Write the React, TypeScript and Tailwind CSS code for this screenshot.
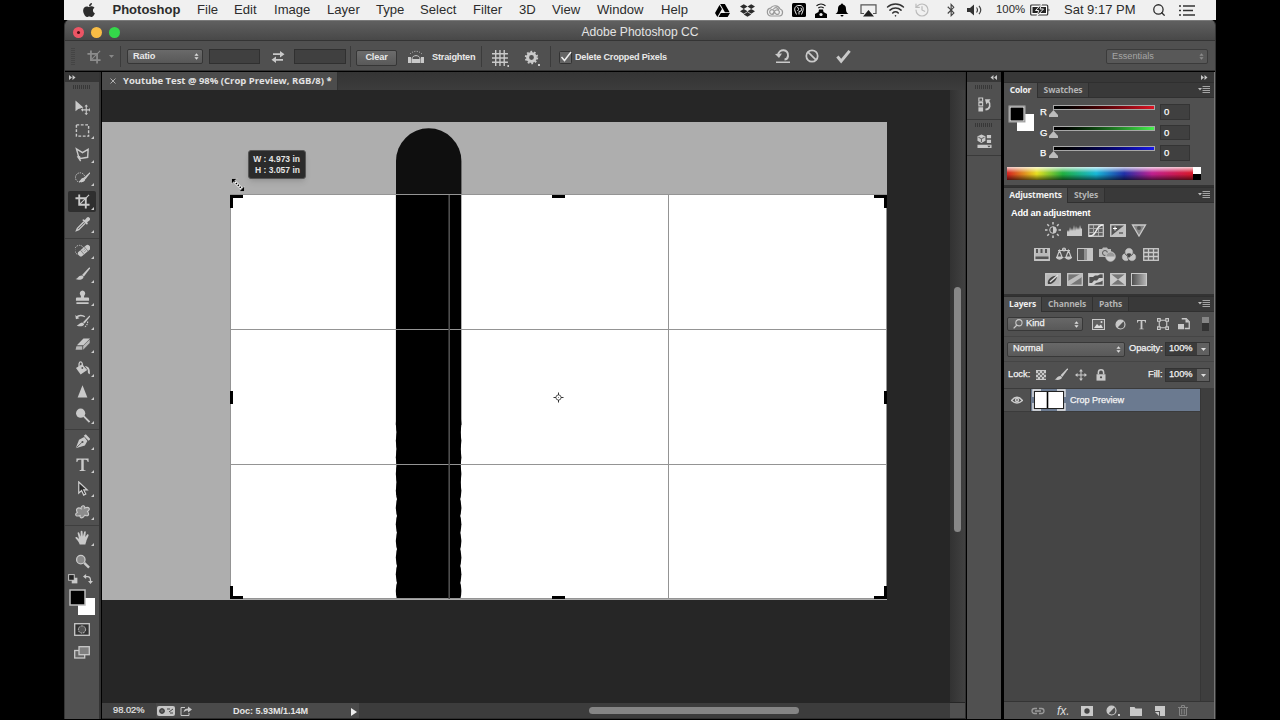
import React from "react";
import { FaApple, FaDropbox, FaBluetoothB, FaGoogleDrive } from "react-icons/fa";
import { Wifi, History, Search } from "lucide-react";

type P = { children?: React.ReactNode; className?: string };

/* 16-unit icon canvas shared by every tool and panel glyph */
const Icon = ({ children, className = "size-4" }: P) => (
  <svg viewBox="0 0 16 16" className={`shrink-0 ${className}`} fill="#c9c9c9" stroke="none">
    {children}
  </svg>
);

const line = { fill: "none", stroke: "#c9c9c9" } as const;

const CropGlyph = () => (
  <g {...line} strokeWidth="2">
    <path d="M4.5 .5v11H15.500M.5 4.500h11V15.500" />
    <path d="M5.500 10.500 15 1" strokeWidth="1.200" />
  </g>
);
const BrushGlyph = () => (
  <>
    <path d="M15.300.3 16.200 1.200 9.500 10.200 7.500 8.400z" />
    <path d="M7 9c1.500.2 2.300 1.100 2 2.200C8.300 13.600 3.500 14.500.5 12.800 3.200 12.600 3.500 9 7 9z" />
  </>
);
const MoveGlyph = () => (
  <>
    <path d="M8 2v12M2 8h12" {...line} strokeWidth="1.400" />
    <path d="M8 0l2.600 3.400H5.400zM8 16l2.600-3.400H5.400zM0 8l3.400-2.600v5.200zM16 8l-3.400-2.600v5.200z" />
  </>
);
const TypeGlyph = () => <path d="M1.500 1.500h13v3.800h-1c-.3-1.600-.9-2.300-2.500-2.300H9.300v10c0 .9.500 1.200 2 1.300v.7H4.700v-.7c1.500-.1 2-.4 2-1.300V3H5C3.400 3 2.800 3.700 2.500 5.300h-1z" />;
const HalfCircleGlyph = () => (
  <>
    <circle cx="8" cy="8" r="6.500" {...line} strokeWidth="1.700" />
    <path d="M12.600 3.400A6.500 6.500 0 0 0 3.400 12.600z" />
  </>
);

const toolGroups: { glyph: React.ReactNode; corner?: boolean; active?: boolean }[][] = [
  [
    {
      glyph: (
        <>
          <path d="M.5.5v11.500l3-2.500 5.500-1.500z" />
          <path d="M12 6v9M7.500 10.500h9" {...line} strokeWidth="1.200" />
          <path d="M12 4.800l1.900 2.200h-3.800zM12 16.200l1.900-2.200h-3.800zM6.300 10.500l2.200-1.900v3.800zM17 10.500l-1.800-1.900v3.800z" />
        </>
      ),
    },
    { glyph: <rect x="1.500" y="2" width="13" height="12" {...line} strokeWidth="1.500" strokeDasharray="3 1.700" />, corner: true },
    { glyph: <path d="M1.500 2 8 6l6-3.500-.5 8.500-9 1.500zM4.500 12.500 3 10.500c2-1 3 1 1.500 2L6 15" {...line} strokeWidth="1.500" />, corner: true },
    {
      glyph: (
        <>
          <circle cx="5.500" cy="8" r="5" {...line} strokeWidth="1" strokeDasharray="1.500 1" />
          <path d="M15.800 2.300 16.500 3l-5.300 6.800-1.900-1.500z" />
          <path d="M9 8.300c1.700.3 2.200 1.500 1.700 2.500-1.200 2.200-4.400 2.500-6.900 1.400 2.200-.5 2.700-3.900 5.200-3.900z" />
        </>
      ),
      corner: true,
    },
    { glyph: <CropGlyph />, corner: true, active: true },
    {
      glyph: (
        <>
          <path d="M9.500 5 2.500 12l-1 2.500L4 13.500l7-7" {...line} strokeWidth="1.400" />
          <path d="M7.700 3.300 12.700 8.300l1-1.200-.7-1.500 2.400-2A1.900 1.900 0 0 0 12.500.8l-2 2.400L9 2.300z" />
        </>
      ),
      corner: true,
    },
  ],
  [
    {
      glyph: (
        <>
          <circle cx="4.700" cy="7.500" r="5" {...line} strokeWidth="1" strokeDasharray="1.500 1" />
          <g transform="rotate(-40 10 8)">
            <rect x="2.300" y="5" width="15" height="6" rx="2.200" />
            <path d="M7 5v6M12.500 5v6" stroke="#777" strokeWidth=".8" />
            <path d="M8.500 7h.8M10.400 7h.8M8.500 9h.8M10.400 9h.8" stroke="#555" strokeWidth=".8" />
          </g>
        </>
      ),
      corner: true,
    },
    { glyph: <BrushGlyph />, corner: true },
    { glyph: <path d="M8 .5a3 3 0 0 1 2.500 4.500C9.600 6.300 9.500 7 9.700 8H14a1 1 0 0 1 1 1v2.500H1V9a1 1 0 0 1 1-1h4.300c.2-1 .1-1.700-.8-3A3 3 0 0 1 8 .5zM1.500 13h13v2h-13z" />, corner: true },
    {
      glyph: (
        <>
          <path d="M1.500 3.500C4 1 8 1 10.500 3" {...line} strokeWidth="1.500" />
          <path d="M.3 1 1 5.700l3.700-1.200zM15.500 1.700 16.300 2.500 10.200 10.200 8.500 8.700z" />
          <path d="M8 9.200c1.600.5 2 1.400 1.500 2.300-1.400 2-4.500 2.200-7.700.7 2.600-.4 3.700-3.400 6.200-3z" />
          <path d="M13.500 8c0 3-1.500 5-4 6" {...line} strokeWidth="1.200" strokeDasharray="1.500 1" />
        </>
      ),
      corner: true,
    },
    {
      glyph: (
        <>
          <path d="M9 1.500H16L9 8.800H2z" />
          <path d="M1.500 9.800h6.300v3.900H.6zM8.700 9.700l7-7v3.600l-7 7.200z" opacity=".85" />
        </>
      ),
      corner: true,
    },
    {
      glyph: (
        <>
          <path d="M7.500 3.500 13 9.500 6 14.500 1 7.500z" />
          <path d="M5 8.500C3.500 3 4.500 1 6 1s2.300 2 2 6" {...line} strokeWidth="1.400" />
          <path d="M10.500 5.200c3.800.3 5.800 2.200 5.300 8.800-2-.5-2.300-1.500-2.100-4.500z" />
          <circle cx="7.800" cy="7.500" r="1" fill="#555" />
        </>
      ),
      corner: true,
    },
    { glyph: <path d="M8 1.200 13.200 14.500H2.800z" />, corner: true },
    {
      glyph: (
        <>
          <circle cx="6" cy="5.500" r="4.900" />
          <path d="M9 8.500 15.500 15" stroke="#c9c9c9" strokeWidth="1.900" />
        </>
      ),
      corner: true,
    },
  ],
  [
    {
      glyph: (
        <>
          <path d="M9.800 3.300 13.200 7.500 10.500 12.200.8 15.200 4.300 6z" />
          <path d="M9.300 1.900 11.500.2 16.300 5.500 14.500 7.300z" />
          <path d="M1.500 14.500 7.300 9" stroke="#505050" strokeWidth=".9" />
          <circle cx="8" cy="8.500" r="1.100" fill="#505050" />
        </>
      ),
      corner: true,
    },
    { glyph: <TypeGlyph />, corner: true },
    { glyph: <path d="M4 1v12l3-2.800L9.300 15l2.200-1.200L9.300 9.500H13z" fill="#2b2b2b" stroke="#cfcfcf" strokeWidth="1.300" />, corner: true },
    { glyph: <path d="M6.500 5C6 1.500 11 .5 10.300 4.300c4.700-2 6.700 1.200 3 3.700 2.500 3.500.700 5.500-2.800 4-2.500 4-5.500 3.500-5 .3C1 14-1 11 2.500 9 0 5 3.500 3 6.500 5z" fill="#8c8c8c" stroke="#c9c9c9" strokeWidth="1.200" />, corner: true },
  ],
  [
    { glyph: <path d="M5 15.500C4.500 13 2 10.500.6 8.800c-.6-1 .6-1.900 1.600-1L4.300 9.700 2.800 3.500c-.2-1.300 1.500-1.600 1.800-.4L6 7.200 6 1.700c0-1.300 1.900-1.300 2 0L8.400 7l1.300-4.900c.3-1.200 2-.9 1.800.4l-.6 5 1.800-2.500c.8-.9 2.200 0 1.700 1L12.300 11c-.3 2-1 3-1.200 4.500z" />, corner: true },
    {
      glyph: (
        <>
          <circle cx="6.200" cy="6" r="4.500" fill="#8b8b8b" stroke="#c9c9c9" strokeWidth="1.400" />
          <path d="M9.800 9.500 15 14.500" stroke="#c9c9c9" strokeWidth="2.600" />
        </>
      ),
    },
  ],
];

const Toolbar = () => (
  <aside className="flex w-[36px] shrink-0 flex-col items-center border-r-2 border-[#333] bg-[#505050]">
    <div className="flex h-[10px] w-full items-center bg-[#373737] pl-1">
      <Chevrons />
    </div>
    <Grip />
    <div className="mt-[6.500px] flex w-full flex-col gap-[1.500px]">
      {toolGroups.map((group, i) => (
        <div key={i} className={i ? "border-t border-[#3e3e3e]" : ""}>
          {group.map((tool, j) => (
            <div key={j} className="flex h-[23.500px] items-center justify-center">
              <div className={`relative flex h-[21px] w-[28px] items-center justify-center rounded-[2px] ${tool.active ? "bg-[#2f2f2f]" : ""}`}>
                <Icon className="size-[15px]">{tool.glyph}</Icon>
                {tool.corner && (
                  <svg viewBox="0 0 3 3" className="absolute right-0.5 bottom-0.5 size-[3px]">
                    <path d="M3 0v3H0z" fill="#ccc" />
                  </svg>
                )}
              </div>
            </div>
          ))}
        </div>
      ))}
    </div>
    <div className="mt-px flex w-full items-center justify-between pr-1.5 pl-[3px]">
      <Icon className="size-[10px]">
        <rect x="6" y="6" width="9" height="9" />
        <rect x="1" y="1" width="9" height="9" fill="#222" stroke="#ccc" strokeWidth="1.500" />
      </Icon>
      <Icon className="size-[10px]">
        <path d="M4 4h3q5 0 5 6v2" {...line} strokeWidth="2" />
        <path d="M0 4l5-4v8zM12 16l-4-5h8z" />
      </Icon>
    </div>
    <svg viewBox="0 0 27 27" className="mt-[5px] size-[27px] shrink-0">
      <rect x="9" y="9" width="17" height="17" fill="#fff" />
      <rect x="1" y="1" width="15" height="15" fill="#000" stroke="#bdbdbd" strokeWidth="1.500" />
    </svg>
    <svg viewBox="0 0 16 13" className="mt-[7px] h-[13px] w-4 shrink-0">
      <rect x=".7" y=".7" width="14.600" height="11.600" fill="#333" stroke="#c9c9c9" strokeWidth="1.300" />
      <circle cx="8" cy="6.500" r="3.600" fill="#555" stroke="#c9c9c9" strokeDasharray="1.800 .8" />
    </svg>
    <svg viewBox="0 0 16 13" className="mt-[10px] h-[13px] w-4 shrink-0">
      <rect x=".7" y="4.500" width="10" height="7.500" fill="#666" stroke="#c9c9c9" strokeWidth="1.300" />
      <rect x="5" y=".7" width="10.300" height="8" fill="#808080" stroke="#c9c9c9" strokeWidth="1.300" />
    </svg>
  </aside>
);

const Chevrons = ({ flip = false }: { flip?: boolean }) => (
  <svg viewBox="0 0 7 5" className={`h-[5px] w-[7px] ${flip ? "-scale-x-100" : ""}`} fill="#c8c8c8">
    <path d="M0 0l3 2.500L0 5zM3.500 0l3 2.500-3 2.500z" />
  </svg>
);

const Grip = () => (
  <svg viewBox="0 0 18 4" className="mt-[3px] h-1 w-[18px] shrink-0">
    <path d="M0 1h18M0 3h18" stroke="#2f2f2f" strokeDasharray="1 1" strokeWidth="1.500" />
  </svg>
);

const UpDown = ({ dim = false }: { dim?: boolean }) => (
  <svg viewBox="0 0 6 8" className="h-[7px] w-[5px]" fill={dim ? "#8c8c8c" : "#ddd"}>
    <path d="M3 0l2.500 3h-5zM3 8l2.500-3h-5z" />
  </svg>
);

const Divider = ({ className = "" }: P) => <div className={`h-[21px] w-px shrink-0 bg-[#3b3b3b] ${className}`} />;

const menus = [
  ["File", "w-[37px]"], ["Edit", "w-[40px]"], ["Image", "w-[53px]"], ["Layer", "w-[49px]"], ["Type", "w-[44px]"],
  ["Select", "w-[53px]"], ["Filter", "w-[46px]"], ["3D", "w-[33px]"], ["View", "w-[45px]"], ["Window", "w-[64px]"], ["Help", "w-[54px]"],
];

const MenuBar = () => (
  <header className="flex h-5 items-center bg-[#f0f0f0] pl-[17px] text-[13.100px] text-[#2c2c2c]">
    <div className="w-[31.500px]"><FaApple className="-mt-px size-4" /></div>
    <div className="w-[84.500px] text-[13px] font-bold">Photoshop</div>
    {menus.map(([label, width]) => (
      <div key={label} className={`shrink-0 whitespace-nowrap ${width}`}>{label}</div>
    ))}
    <div className="flex shrink-0 items-center">
      <div className="w-[25px]"><FaGoogleDrive className="size-[15px] text-black" /></div>
      <div className="w-[26px]"><FaDropbox className="size-[15px]" /></div>
      <div className="w-[26px]">
        <svg viewBox="0 0 18 13" className="h-[13px] w-[18px]" fill="none" stroke="#999" strokeWidth="1.200">
          <path d="M5 12a4 4 0 0 1-.5-7.900A5.500 5.500 0 0 1 14 5a3.600 3.600 0 0 1-.5 7z" />
          <circle cx="6" cy="8" r="2.300" /><path d="M8 7.500 10 10c3 2 5-3 1.500-4S8 10 6 10.500M7.500 5c2-2.500 5-1 5 1" />
        </svg>
      </div>
      <div className="w-[22px]">
        <svg viewBox="0 0 14 14" className="size-[14px]">
          <rect width="14" height="14" rx="1.500" fill="#000" />
          <path d="M7 2.500C3.500 2.500 2 5 3 8l1.500 3.500M5 5c1-1 2 0 1.500 1.500L5.500 8M7 2.500c3-.5 5 2 4 5L9.500 11.500M8.500 5c1.500 0 1.500 2 .5 3l-2 .5v3" fill="none" stroke="#eee" strokeWidth="1" />
        </svg>
      </div>
      <div className="w-[21px]">
        <svg viewBox="0 0 14 15" className="h-[15px] w-[14px]">
          <path d="M2.500 2.800Q7-.8 11.500 2.800M4.300 5Q7 3 9.700 5" fill="none" stroke="#111" strokeWidth="1.100" />
          <path d="M5 6.500h4l.5 2.500L13 11v4H1v-4l3.500-2z" fill="#000" /><circle cx="7" cy="11.500" r="1.600" fill="#eee" />
        </svg>
      </div>
      <div className="w-[25px]">
        <svg viewBox="0 0 14 14" className="size-[14px]">
          <path d="M7 .5a1 1 0 0 1 1 1c2.500.5 3 2.500 3 4.500 0 3 1 4 2.500 5H.5C2 10 3 9 3 6c0-2 .5-4 3-4.500a1 1 0 0 1 1-1zM5.500 12h3a1.500 1.500 0 0 1-3 0z" fill="#000" />
        </svg>
      </div>
      <div className="w-[26px]">
        <svg viewBox="0 0 17 13" className="h-[13px] w-[17px]">
          <path d="M4 9.500H1V.8h15v8.700h-3" fill="none" stroke="#555" strokeWidth="1.200" /><path d="M8.500 6 14 12.500H3z" fill="#222" />
        </svg>
      </div>
      <div className="w-[28px]"><Wifi className="-mt-0.5 size-[19px] text-[#333]" strokeWidth={2} /></div>
      <div className="w-[30px]"><History className="size-4 text-[#bbb]" strokeWidth={1.8} /></div>
      <div className="w-[23px]"><FaBluetoothB className="size-[14px] text-[#444]" /></div>
      <div className="w-[29px]">
        <svg viewBox="0 0 16 12" className="h-3 w-4" fill="#333">
          <path d="M0 4h3l4-3.500v11L3 8H0z" /><path d="M9.500 3.500q2 2.500 0 5M12 1.800q3.500 4.200 0 8.400" fill="none" stroke="#444" strokeWidth="1.200" />
        </svg>
      </div>
      <div className="w-[34px] text-[11.400px]">100%</div>
      <div className="w-[34px]">
        <svg viewBox="0 0 21 12" className="h-3 w-[21px]">
          <rect x=".7" y="1" width="17" height="10" rx="1" fill="#fff" stroke="#333" strokeWidth="1.200" />
          <path d="M2.500 3h13.500v6H2.500z" fill="#222" /><path d="M18.500 4.500q2 1.500 0 3z" fill="#333" />
          <path d="M11.500 0 5.500 6.500h3.200L7 12l6.500-7H10z" fill="#222" stroke="#f0f0f0" strokeWidth="1" />
        </svg>
      </div>
      <div className="w-[88px] text-[13px] whitespace-nowrap">Sat 9:17 PM</div>
      <div className="w-[27px]"><Search className="size-[14px]" strokeWidth={2.2} /></div>
      <svg viewBox="0 0 17 11" className="h-[11px] w-[17px]">
        <path d="M4 1h12M4 5.500h10M4 10h12" stroke="#333" strokeWidth="1.500" /><path d="M0 1h2M0 5.500h2M0 10h2" stroke="#333" strokeWidth="1.500" />
      </svg>
    </div>
  </header>
);

const TitleBar = () => (
  <div className="grid h-[21px] grid-cols-[1fr_auto_1fr] items-center border-t border-b border-t-[#7a7a7a] border-b-[#343434] bg-linear-to-b from-[#606060] to-[#484848] px-2">
    <div className="mt-0.5 flex gap-[7px]">
      <div className="flex size-[11px] items-center justify-center rounded-full bg-[#ed5565]"><div className="size-[3px] rounded-full bg-[#4d0d14]" /></div>
      <div className="size-[11px] rounded-full bg-[#f9bd45]" />
      <div className="size-[11px] rounded-full bg-[#34d84a]" />
    </div>
    <div className="mt-0.5 text-[12.100px] text-[#e4e4e4]">Adobe Photoshop CC</div>
  </div>
);

const OptionsBar = () => (
  <div className="flex h-[30px] items-center border-b border-[#343434] bg-[#505050] pt-[2px] pl-[6px] text-[9.200px] font-bold tracking-[-0.150px] text-[#e8e8e8]">
    <svg viewBox="0 0 4 18" className="h-[18px] w-1"><path d="M1 0v18M3 0v18" stroke="#383838" strokeDasharray="1 1" /></svg>
    <Icon className="ml-3 size-[14px] opacity-50"><CropGlyph /></Icon>
    <svg viewBox="0 0 5 3" className="ml-2 h-[3px] w-[5px]"><path d="M0 0h5L2.500 3z" fill="#888" /></svg>
    <Divider className="ml-[6px]" />
    <div className="ml-[6px] flex h-[15px] w-[76px] items-center justify-between rounded-[2px] border border-[#363636] bg-linear-to-b from-[#6a6a6a] to-[#585858] pr-[3px] pl-[5px]">Ratio<UpDown /></div>
    <div className="ml-[6px] h-[15px] w-[51px] border border-[#303030] bg-[#404040]" />
    <svg viewBox="0 0 14 12" className="ml-[11px] h-3 w-[14px]" fill="#c9c9c9"><path d="M2 2.300h7V0l4.500 3.200L9 6.400V4.100H2zM12 9.700H5V12L.5 8.800 5 5.600v2.300h7z" /></svg>
    <div className="ml-[9px] h-[15px] w-[52px] border border-[#303030] bg-[#404040]" />
    <Divider className="ml-[4px]" />
    <div className="mt-[3px] ml-[5px] flex h-[16px] w-[41px] items-center justify-center rounded-[2px] border border-[#363636] bg-linear-to-b from-[#6c6c6c] to-[#595959]">Clear</div>
    <svg viewBox="0 0 16 14" className="mt-[1px] ml-[11px] h-[14px] w-4" fill="#c9c9c9">
      <path d="M0 7h3v6H0zM13 7h3v6h-3zM3.500 9h9v4h-9z" /><path d="M4 9c0-4.500 8-4.500 8 0" fill="none" stroke="#c9c9c9" /><path d="M2 4Q8-1.500 14 4" fill="none" stroke="#c9c9c9" strokeDasharray="1 1.500" />
    </svg>
    <div className="mt-[3px] ml-2 w-[49px] tracking-[-0.200px]">Straighten</div>
    <Divider />
    <Icon className="mt-[3px] ml-[10px] size-[17px]"><path d="M3.500 0v15M7.500 0v15M11.500 0v15M0 3.500h15M0 7.500h15M0 11.500h15" {...line} strokeWidth="1.300" /><path d="M14.500 14h2v2h-2z" /></Icon>
    <Icon className="mt-[3px] ml-[15px] size-4">
      <circle cx="7.500" cy="7.500" r="3.900" {...line} strokeWidth="3" /><circle cx="7.500" cy="7.500" r="5.700" {...line} strokeWidth="2" strokeDasharray="1.790 1.790" /><path d="M14 14h2v2h-2z" />
    </Icon>
    <Divider className="ml-[10px]" />
    <svg viewBox="0 0 13 13" className="mt-[1px] ml-2 size-[13px]"><rect x=".5" y=".5" width="12" height="12" rx="1" fill="#646464" stroke="#333" /><path d="M2.500 6 5.500 9.500 12 1" fill="none" stroke="#eee" strokeWidth="1.500" /></svg>
    <div className="mt-[3px] ml-[3px] w-[200px] text-[9.100px] tracking-[-0.200px]">Delete Cropped Pixels</div>
    <Icon className="-mt-0.5 size-4"><path d="M3 7C4 0 14 1 13 8c-.3 2-1.500 3.500-3.500 3.500" {...line} strokeWidth="2" /><path d="M0 6l7-.5L4 10zM1 13.500h14V15H1z" /></Icon>
    <Icon className="-mt-0.5 ml-[14px] size-[14px]"><circle cx="8" cy="8" r="6.500" {...line} strokeWidth="2" /><path d="M3.500 3.500l9 9" {...line} strokeWidth="2" /></Icon>
    <Icon className="-mt-px ml-[17px] size-[15px]"><path d="M1.500 8 5.500 13 14.500 2" {...line} strokeWidth="3.200" /></Icon>
    <div className="mr-[7px] ml-auto flex h-[15px] w-[102px] items-center justify-between rounded-[2px] border border-[#3b3b3b] bg-[#585858] pr-[3px] pl-[5px] font-normal tracking-normal text-[#a5a5a5]">Essentials<UpDown dim /></div>
  </div>
);

/* Stroke edge becomes scalloped where the brush dabs were spaced apart */
const dabs = [0, 1, 2, 3, 4, 5, 6, 7, 8, 9, 10];

const Artwork = () => (
  <svg viewBox="102 122 785 478" className="block h-[478px] w-[785px]">
    <rect x="102" y="122" width="785" height="478" fill="#aeaeae" />
    <path d="M396 200V161a32.700 32.700 0 0 1 65.400 0v39z" fill="#0f0f0f" />
    <rect x="230" y="195" width="657" height="404" fill="#fff" />
    <rect x="395.900" y="195" width="65.400" height="230" fill="#000" />
    <rect x="396.400" y="420" width="64.400" height="75" fill="#000" />
    <clipPath id="sheet"><rect x="230" y="195" width="657" height="404" /></clipPath>
    <g clipPath="url(#sheet)">
      {dabs.map((n) => <circle key={n} cx="428.600" cy={424 + n * 16.7} r="32.800" fill="#000" />)}
    </g>
    <g fill="none" stroke="#949494">
      <path d="M230.500 194.500v404M230 194.500h657M230 329.500h657M230 464.500h657M668.500 195v404M230 598.500h657M886.500 195v404" />
      <path d="M449.200 195v404" stroke="#4e4e4e" strokeWidth="1.600" />
    </g>
    <path d="M230 195h13v3h-10v10h-3zM887 195h-13v3h10v10h3zM230 599h13v-3h-10v-10h-3zM887 599h-13v-3h10v-10h3zM552 195h13v3h-13zM552 596h13v3h-13zM230 391h3v13h-3zM884 391h3v13h-3z" fill="#000" />
    <circle cx="558.500" cy="397.500" r="2.600" fill="none" stroke="#555" />
    <path d="M558.500 392.500v2.500M558.500 400v2.500M553.500 397.500h2.500M561 397.500h2.500" stroke="#333" />
    <circle cx="558.500" cy="397.500" r=".5" fill="#555" />
  </svg>
);

const DocumentArea = () => (
  <main className="ml-px flex w-[864px] shrink-0 flex-col border-r border-[#303030] bg-[#262626]">
    <div className="h-[18px] bg-linear-to-b from-[#343434] to-[#3c3c3c]">
      <div className="flex h-[18px] w-[236px] items-center gap-[7px] border-r border-[#333] bg-[#4c4c4c] pl-2 font-['Open_Sans'] text-[9.500px] font-bold text-[#e2e2e2]">
        <svg viewBox="0 0 6 6" className="size-[6px]"><path d="M.5.5l5 5M5.500.5l-5 5" stroke="#bbb" strokeWidth=".9" /></svg>
        <span className="whitespace-nowrap">Youtube Test @ 98% (Crop Preview, RGB/8) *</span>
      </div>
    </div>
    <div className="flex h-[613px]">
      <div className="relative w-[848px] pt-8">
        <Artwork />
        <div className="absolute top-[60px] left-[146px] h-[29px] w-[58px] rounded-[3px] border border-[#555] bg-[#2b2b2b] pt-[3px] pr-[5px] text-right text-[8.500px] leading-[11px] font-bold whitespace-nowrap text-[#e5e5e5] shadow-md">
          <div>W : 4.973 in</div>
          <div>H : 3.057 in</div>
        </div>
        <svg viewBox="0 0 14 14" className="absolute top-[88px] left-[129px] size-[14px]">
          <path d="M3 3l8 8" stroke="#fff" strokeWidth="2.500" /><path d="M3 3l8 8" stroke="#000" strokeWidth="1.500" strokeDasharray="1.500 1.200" />
          <path d="M.5.5H6L.5 6zM13.500 13.500H8l5.500-5.500z" fill="#000" stroke="#ddd" strokeWidth=".6" />
        </svg>
      </div>
      <div className="w-[15px] bg-linear-to-r from-[#323232] to-[#414141] pt-[197px] pl-1"><div className="h-[245px] w-[7px] rounded-full bg-[#878787]" /></div>
    </div>
    <div className="mt-px flex h-[16px] items-center border-b border-[#2d2d2d] bg-[#3c3c3c] text-[9.300px] text-[#e5e5e5]">
      <div className="flex h-full w-[257px] items-center bg-[#4a4a4a]">
        <div className="flex h-full w-[54px] items-center bg-[#424242] pt-px pl-[11px] [-webkit-text-stroke:0.200px]">98.02%</div>
        <svg viewBox="0 0 18 10" className="mt-px ml-[1px] h-[10px] w-[18px]"><rect width="18" height="10" rx="2" fill="#c6c6c6" /><circle cx="5" cy="5" r="2" fill="none" stroke="#444" strokeWidth="1.500" /><path d="M5 2v6M2 5h6M10 3h3M12 6l4-3M13 7h3" stroke="#444" /></svg>
        <svg viewBox="0 0 12 10" className="ml-[5px] h-[10px] w-3"><path d="M5 1.500H1v8h8V7" fill="none" stroke="#c6c6c6" /><path d="M3.500 6.500C4 3.500 5.500 2.600 8 2.600V.5L12 3.500 8 6.500V4.500C6 4.500 5 5 3.500 6.500z" fill="#c6c6c6" /></svg>
        <div className="ml-[41px] w-[118px] pt-0.5 text-[9.100px] font-bold tracking-[-0.050px]">Doc: 5.93M/1.14M</div>
        <svg viewBox="0 0 6 8" className="mt-0.5 h-2 w-[6px]"><path d="M0 0l6 4-6 4z" fill="#eee" /></svg>
      </div>
      <div className="ml-[230px] h-[7px] w-[210px] rounded-full bg-[#858585]" />
      <div className="ml-auto h-full w-[15px] bg-[#505050]" />
    </div>
  </main>
);

const IconDock = () => (
  <div className="ml-px flex w-[34px] shrink-0 flex-col items-center bg-[#505050]">
    <div className="flex h-[10px] w-full items-center justify-end bg-[#373737] pr-1"><Chevrons flip /></div>
    <Grip />
    <div className="flex h-[31px] w-full items-center justify-center border-b border-[#3a3a3a]">
      <Icon className="size-[15px]">
        <path d="M2 1h4v3.500H2zM2 6h4v3.500H2z" {...line} strokeWidth="1.200" /><path d="M1.500 11h5v4.500h-5z" />
        <path d="M9 13.500C14 13 15 8 12 4" {...line} strokeWidth="1.900" /><path d="M8.500 2.500h6L10 8z" />
      </Icon>
    </div>
    <Grip />
    <div className="flex h-[29px] w-full items-center justify-center border-b border-[#3a3a3a]">
      <Icon className="size-[15px]">
        <path d="M4.700.5 9 2.500v4.800l-4.300 2.200L.5 7.300V2.500z" /><path d="M1.500 3.500 4.700 5 8 3.500M4.700 5v3.500" fill="none" stroke="#555" />
        <path d="M10.500 1h4.500v3.500h-4.500zM10.500 6h4.500v3.500h-4.500zM.5 11.500h15V15H.5z" /><path d="M11 12.500h3.500l-1.700 2z" fill="#444" />
      </Icon>
    </div>
  </div>
);

const PanelTabs = ({ tabs }: { tabs: [string, string][] }) => (
  <div className="flex h-[16px] shrink-0 items-stretch border-t border-[#2f2f2f] bg-[#393939] font-['Open_Sans'] text-[8.500px] font-bold tracking-[-0.150px]">
    {tabs.map(([name, width], i) => (
      <div key={name} className={`flex items-center justify-center border-r border-[#303030] ${width} ${i === 0 ? "bg-[#505050] text-[#f0f0f0]" : "border-b bg-[#414141] text-[#b4b4b4]"}`}>{name}</div>
    ))}
    <div className="flex flex-1 items-center justify-end border-b border-[#303030] pr-1">
      <svg viewBox="0 0 12 8" className="h-2 w-3"><path d="M0 2h4L2 4.500z" fill="#bbb" /><path d="M4.500.5H12M4.500 2.500H12M4.500 4.500H12M4.500 6.500H12" stroke="#a5a5a5" /></svg>
    </div>
  </div>
);

const channels = [
  ["R", "to-[#dc1424]"],
  ["G", "to-[#46f04e]"],
  ["B", "to-[#1818e8]"],
];

const ColorPanel = () => (
  <section className="h-[87px] bg-[#505050]">
    <div className="flex h-[69px] pl-1">
      <svg viewBox="0 0 27 27" className="mt-[7px] size-[27px]"><rect x="9" y="9" width="17" height="17" fill="#fff" /><rect x="1" y="1" width="16" height="16" fill="#000" stroke="#aaa" /><rect x="2" y="2" width="14" height="14" fill="none" stroke="#fff" /></svg>
      <div className="flex flex-col gap-[5px] pt-[6px] pl-[5px]">
        {channels.map(([name, to]) => (
          <div key={name} className="flex h-[15.700px] items-start text-[9.500px] leading-4 text-white [-webkit-text-stroke:0.250px]">
            <div className="w-[13px]">{name}</div>
            <div className="mt-px w-[102px]">
              <div className={`h-[5px] border border-[#a8a8a8] bg-linear-to-r from-black ${to}`} />
              <svg viewBox="0 0 9 7" className="-ml-1 h-[7px] w-[9px]"><path d="M4.500 0 9 5v2H0V5z" fill="#bdbdbd" /></svg>
            </div>
            <div className="ml-[5px] h-[15.700px] w-[30px] border border-[#343434] bg-[#404040] pl-[3px] leading-[14px]">0</div>
          </div>
        ))}
      </div>
    </div>
    <div className="ml-[3px] flex h-[13px] w-[194px]">
      <div className="flex-1 bg-[linear-gradient(90deg,#d62020,#e8e020_16%,#20b040_30%,#18b8d8_48%,#2030a8_63%,#c02090_78%,#d81828)]">
        <div className="h-full bg-[linear-gradient(180deg,#ffffffcc,#ffffff00_45%,#00000000_55%,#00000099)]" />
      </div>
      <div className="flex w-2 flex-col"><div className="h-[7px] bg-white" /><div className="h-[6px] bg-black" /></div>
    </div>
  </section>
);

const Frame = ({ children, fill = "#b9b9b9" }: P & { fill?: string }) => (
  <svg viewBox="0 0 16 13" className="h-[13px] w-4 shrink-0"><rect x=".7" y=".7" width="14.600" height="11.600" fill={fill} stroke="#c9c9c9" strokeWidth="1.300" />{children}</svg>
);

const AdjustmentsPanel = () => (
  <section className="h-[91px] bg-[#505050] pt-1">
    <div className="pl-[7px] text-[9.200px] leading-[13px] font-bold tracking-[-0.200px] text-white">Add an adjustment</div>
    <div className="flex h-[20px] items-center gap-[5.600px] pl-[41px]">
      <Icon><circle cx="8" cy="8" r="3.300" {...line} /><path d="M8 4.700a3.300 3.300 0 0 1 0 6.600z" /><path d="M8 0v2.500M8 13.500V16M0 8h2.500M13.500 8H16M2.300 2.300 4 4M12 12l1.700 1.700M13.700 2.300 12 4M4 12l-1.700 1.700" {...line} strokeWidth="1.500" /></Icon>
      <svg viewBox="0 0 16 11" className="h-[11px] w-4" fill="#c9c9c9"><path d="M0 11V7l1-2 1 2 1-5 1 4 1-3 1 3 1-6 1 6 1-5 1 4 1-3 1 3 1-5 1 4 1-1v8z" /></svg>
      <Frame fill="#606060"><path d="M1 4.500h14M1 8.500h14M5.500 1v11M10.500 1v11" stroke="#aaa" /><path d="M1 12C10 12 7 1 15 1" fill="none" stroke="#eee" strokeWidth="1.400" /></Frame>
      <Frame fill="#c0c0c0"><path d="M1.500 11.500v-10h12.500z" fill="#555" /><path d="M3 4.500h4M5 2.500v4" stroke="#fff" /><path d="M9 9h4" stroke="#333" strokeWidth="1.200" /></Frame>
      <svg viewBox="0 0 16 13" className="h-[13px] w-4"><path d="M1.500 1h13L8 12z" fill="#858585" stroke="#c9c9c9" strokeWidth="1.300" /><circle cx="8" cy="4" r="2" fill="#555" /></svg>
    </div>
    <div className="mt-[4px] flex h-[20px] items-center gap-[5.600px] pl-[30px]">
      <Frame><path d="M2 1h2v4H2zM6.500 1h2v4h-2zM11 1h2v4h-2zM1.500 8.500h13v2.500h-13z" fill="#555" /></Frame>
      <svg viewBox="0 0 16 14" className="h-[14px] w-4" fill="none" stroke="#c9c9c9" strokeWidth="1.200"><path d="M8 1v3M2 3.500h12M3.500 3.500 1 10h5zM12.500 3.500 10 10h5z" /><circle cx="8" cy="2.500" r="1.500" /><path d="M.5 10.500h6q-3 3-6 0zM9.500 10.500h6q-3 3-6 0z" fill="#c9c9c9" /></svg>
      <Frame fill="#c3c3c3"><path d="M1 1h6v11H1z" fill="#555" /><path d="M7 1h3v11H7z" fill="#909090" /></Frame>
      <svg viewBox="0 0 17 15" className="h-[15px] w-[17px]"><path d="M0 2h3l1-1.500h4L9 2h3v8H0z" fill="#b9b9b9" /><circle cx="6" cy="6" r="2.500" fill="none" stroke="#555" /><circle cx="11.500" cy="9.500" r="4.700" fill="#999" stroke="#ccc" /><path d="M7 9.500h9a4.500 4.500 0 0 1-9 0z" fill="#ccc" /></svg>
      <svg viewBox="0 0 16 15" className="h-[15px] w-4"><g fill="#c4c4c4" stroke="#4a4a4a" strokeWidth=".8"><circle cx="5" cy="10" r="4.300" /><circle cx="11" cy="10" r="4.300" /><circle cx="8" cy="5" r="4.300" /></g><path d="M5.500 7q2.500-1.500 5 0L8 11z" fill="#444" /></svg>
      <Frame fill="#606060"><path d="M1 4.500h14M1 8.500h14M5.500 1v11M10.500 1v11" stroke="#c9c9c9" strokeWidth="1.300" /></Frame>
    </div>
    <div className="mt-[5px] flex h-[20px] items-center gap-[5.600px] pl-[41px]">
      <Frame><path d="M3 11C1 5 12 1 12 3.500S8 12 3 11z" fill="#444" /><path d="M5 9 13 2" stroke="#ddd" strokeWidth="1.500" /></Frame>
      <Frame fill="#777"><path d="M1 8 13 1h2v3L3 12H1z" fill="#bdbdbd" /></Frame>
      <Frame fill="#505050"><path d="M1 10h3l2-2.500h3L11 5h4v2.500L12 9l-4 1-2 2H1zM1 4h4l2-1.500h3L12 1H1z" fill="#d0d0d0" /></Frame>
      <Frame fill="#777"><path d="M1 1 8 6.500 1 12zM15 1 8 6.500 15 12z" fill="#c9c9c9" /></Frame>
      <div className="h-[13px] w-4 border border-[#c9c9c9] bg-linear-to-r from-[#505050] to-[#b5b5b5]" />
    </div>
  </section>
);

const PercentField = () => (
  <div className="flex h-[14px] w-[45px] shrink-0 border border-[#333]">
    <div className="flex w-[31px] items-center bg-[#3b3b3b] pl-[3px] tracking-[-0.100px]">100%</div>
    <div className="flex flex-1 items-center justify-center bg-[#606060]"><svg viewBox="0 0 5 3" className="h-[3px] w-[5px]"><path d="M0 0h5L2.500 3z" fill="#ddd" /></svg></div>
  </div>
);

const LayersPanel = () => (
  <section className="flex flex-1 flex-col bg-[#505050] text-[9.300px] text-[#f2f2f2] [-webkit-text-stroke:0.250px]">
    <div className="flex h-[25px] items-center border-b border-[#454545] pl-[3px]">
      <div className="flex h-[14px] w-[76px] items-center rounded-[2px] border border-[#383838] bg-linear-to-b from-[#686868] to-[#595959] pr-[3px] pl-[5px]">
        <Icon className="size-[10px]"><circle cx="9.500" cy="6" r="5" {...line} strokeWidth="1.700" /><path d="M6 10 1 15" {...line} strokeWidth="2" /></Icon>
        <span className="ml-[3px] flex-1">Kind</span><UpDown />
      </div>
      <svg viewBox="0 0 13 11" className="ml-[9px] h-[11px] w-[13px]"><rect x=".5" y=".5" width="12" height="10" fill="#606060" stroke="#c9c9c9" /><path d="M2 9 5 5l2 2 2-1.500L11 9z" fill="#ddd" /><circle cx="9.500" cy="3" r="1" fill="#ddd" /></svg>
      <Icon className="ml-[10px] size-[11px]"><HalfCircleGlyph /></Icon>
      <Icon className="ml-[10px] size-[11px]"><TypeGlyph /></Icon>
      <Icon className="ml-[10px] size-3"><path d="M3 3h10v10H3z" {...line} strokeWidth="1.500" /><path d="M0 0h5v5H0zM11 0h5v5h-5zM0 11h5v5H0zM11 11h5v5h-5z" /><path d="M1.500 1.500h2v2h-2zM12.500 1.500h2v2h-2zM1.500 12.500h2v2h-2zM12.500 12.500h2v2h-2z" fill="#505050" /></Icon>
      <Icon className="ml-[9px] size-[12px]"><path d="M5 1h6l4 4v9H9" {...line} strokeWidth="1.700" /><path d="M10 1v5h5zM0 8h8v7H0z" /></Icon>
      <div className="ml-[12px] h-[14px] w-[7px] bg-[#333]"><div className="h-[6px] bg-[#858585]" /></div>
    </div>
    <div className="flex h-[25px] items-center border-b border-[#454545] pl-[3px]">
      <div className="flex h-[15px] w-[118px] items-center justify-between rounded-[2px] border border-[#383838] bg-linear-to-b from-[#686868] to-[#595959] pr-[3px] pl-[5px]">Normal<UpDown /></div>
      <div className="ml-1 w-[36px] tracking-[-0.050px]">Opacity:</div>
      <PercentField />
    </div>
    <div className="flex h-[26px] items-center pl-[4px]">
      <div className="w-[28px]">Lock:</div>
      <svg viewBox="0 0 10 10" className="size-[10px]"><rect width="10" height="10" fill="#c9c9c9" /><path d="M2 1h2v2H2zM6 1h2v2H6zM0 3h2v2H0zM4 3h2v2H4zM8 3h2v2H8zM2 5h2v2H2zM6 5h2v2H6zM0 7h2v2H0zM4 7h2v2H4zM8 7h2v2H8z" fill="#777" /></svg>
      <Icon className="ml-[8px] size-[14px]"><BrushGlyph /></Icon>
      <Icon className="ml-[7px] size-[12px]"><MoveGlyph /></Icon>
      <Icon className="ml-[8px] size-[12px]"><path d="M4.500 7V4.500a3.500 3.500 0 0 1 7 0V7" {...line} strokeWidth="2" /><path d="M2 7h12v8.500H2z" /><circle cx="8" cy="11" r="1.500" fill="#505050" /></Icon>
      <div className="ml-auto w-[17px]">Fill:</div>
      <div className="mr-1"><PercentField /></div>
    </div>
    <div className="flex flex-1">
      <div className="flex flex-1 flex-col bg-[#454545]">
        <div className="flex h-[24px] items-center border-t border-b border-[#3b3b3b] bg-[#6b7a90]">
          <div className="flex h-full w-[27px] items-center justify-center border-r border-[#3b3b3b] bg-[#505050]">
            <svg viewBox="0 0 12 8" className="h-2 w-3"><path d="M.5 4.500Q6-2 11.500 4.500 6 9.500.5 4.500z" fill="none" stroke="#ccc" strokeWidth="1.300" /><circle cx="6" cy="4" r="2.200" fill="#ccc" /><circle cx="6" cy="4" r=".8" fill="#444" /></svg>
          </div>
          <svg viewBox="0 0 34 22" className="ml-px h-[22px] w-[34px]">
            <path d="M1 8V1h8M25 1h8v7M33 14v7h-8M9 21H1v-7" fill="none" stroke="#e8e8e8" strokeWidth="1.300" /><rect x="2.500" y="2.500" width="29" height="17" fill="#fff" stroke="#222" /><path d="M15.500 3v16" stroke="#000" strokeWidth="1.600" />
          </svg>
          <span className="mt-0.5 ml-[4px] text-[9.100px] tracking-[-0.050px]">Crop Preview</span>
        </div>
      </div>
      <div className="w-[14px] border-l border-[#363636] bg-[#3e3e3e]" />
    </div>
    <div className="flex h-[18px] items-center border-t border-[#343434] bg-[#505050] pl-[27px]">
      <svg viewBox="0 0 14 8" className="h-2 w-[14px]" fill="none" stroke="#9a9a9a" strokeWidth="1.300"><path d="M6 1.500H3.500a2.500 2.500 0 0 0 0 5H6M8 1.500h2.500a2.500 2.500 0 0 1 0 5H8M4 4h6" /></svg>
      <div className="ml-3 w-[24px] text-[12px] leading-none text-[#ddd] italic [-webkit-text-stroke:0]">fx.</div>
      <svg viewBox="0 0 12 10" className="h-[10px] w-3"><rect width="12" height="10" fill="#c9c9c9" /><circle cx="6" cy="5" r="2.700" fill="#444" /></svg>
      <Icon className="ml-[13px] size-[11px]"><HalfCircleGlyph /></Icon>
      <div className="mt-2 ml-px size-[2px] bg-[#ccc]" />
      <svg viewBox="0 0 12 10" className="ml-[10px] h-[10px] w-3"><path d="M0 1h4.500l1 1.500H12V10H0z" fill="#c9c9c9" /></svg>
      <svg viewBox="0 0 10 10" className="ml-[13px] size-[10px]"><path d="M0 0h10v10H5V5H0z" fill="#c9c9c9" /><path d="M0 6h4v4z" fill="#c9c9c9" /></svg>
      <svg viewBox="0 0 10 11" className="ml-[13px] h-[11px] w-[10px]" fill="none" stroke="#858585"><path d="M0 2.500h10M3.500 2V.5h3V2M1.500 3v7.500h7V3M3.700 4v5.500M6.300 4v5.500" /></svg>
    </div>
  </section>
);

export default function App() {
  return (
    <div className="flex h-[720px] w-[1280px] justify-center overflow-hidden bg-black font-['Liberation_Sans',sans-serif]">
      <div className="flex w-[1152px] flex-col bg-black">
        <MenuBar />
        <div className="flex h-[699px] flex-col overflow-hidden rounded-t-[5px] border-x border-[#353535]">
          <TitleBar />
          <OptionsBar />
          <div className="flex min-h-0 flex-1 pt-px">
            <Toolbar />
            <DocumentArea />
            <IconDock />
            <div className="ml-[3px] flex flex-1 flex-col gap-[2px] border-r border-[#777] bg-[#333]">
              <div className="-mb-[2px] flex h-[10px] shrink-0 items-center justify-end bg-[#373737] pr-[6px]"><Chevrons /></div>
              <div><PanelTabs tabs={[["Color", "w-[34px]"], ["Swatches", "w-[51px]"]]} /><ColorPanel /></div>
              <div><PanelTabs tabs={[["Adjustments", "w-[64px]"], ["Styles", "w-[37px]"]]} /><AdjustmentsPanel /></div>
              <div className="flex min-h-0 flex-1 flex-col"><PanelTabs tabs={[["Layers", "w-[38px]"], ["Channels", "w-[51px]"], ["Paths", "w-[36px]"]]} /><LayersPanel /></div>
            </div>
          </div>
        </div>
      </div>
    </div>
  );
}
